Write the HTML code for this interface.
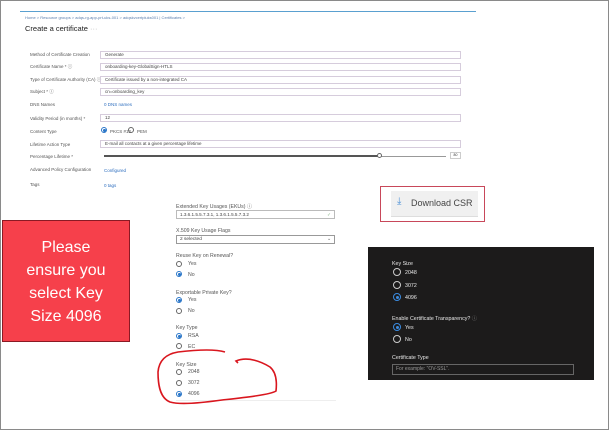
<!DOCTYPE html>
<html><head><meta charset="utf-8"><style>
*{margin:0;padding:0;box-sizing:border-box}
body{width:610px;height:431px;background:#fff;position:relative;overflow:hidden;font-family:"Liberation Sans",sans-serif;color:#333}
.a{position:absolute;white-space:nowrap}
.frame{position:absolute;left:0;top:0;width:609px;height:430px;border:1.5px solid #8a8a8a}
.lbl{font-size:4.5px;color:#555}
.inp{position:absolute;left:100px;width:361px;height:8px;border:1px solid #d6ccdc;font-size:4.5px;padding-left:4px;line-height:6px;color:#444}
.lnk{font-size:4.5px;color:#2f6fbf}
.s{font-size:5.2px;color:#555}
.r{position:absolute;width:6px;height:6px;border:0.8px solid #666;border-radius:50%}
.r.on{border-color:#2a76c8}
.r.on::after{content:"";position:absolute;left:1.2px;top:1.2px;width:2.4px;height:2.4px;border-radius:50%;background:#2a76c8}
.d{font-size:5.3px;color:#e8e8e8}
.dr{position:absolute;width:8px;height:8px;border:0.9px solid #ccc;border-radius:50%}
.dr.on{border-color:#3b8be0}
.dr.on::after{content:"";position:absolute;left:1.7px;top:1.7px;width:3px;height:3px;border-radius:50%;background:#3b8be0}
</style></head><body>
<div class="frame"></div>
<div class="a" style="left:20px;top:11px;width:456px;height:1px;background:#5aa0d0"></div>
<div class="a" style="left:25px;top:15px;font-size:4px;color:#5b7fae">Home &gt; Resource groups &gt; adqs-rg-app-prt-uks-001 &gt; adqskvcertpluks001 | Certificates &gt;</div>
<div class="a" style="left:25px;top:24px;font-size:7.5px;color:#222">Create a certificate <span style="color:#bbb">···</span></div>

<div class="a lbl" style="left:30px;top:52px">Method of Certificate Creation</div>
<div class="inp" style="top:51px">Generate</div>
<div class="a lbl" style="left:30px;top:64px">Certificate Name * ⓘ</div>
<div class="inp" style="top:63px">onboarding-key-GlobalSign-HTLS</div>
<div class="a lbl" style="left:30px;top:77px">Type of Certificate Authority (CA) ⓘ</div>
<div class="inp" style="top:76px">Certificate issued by a non-integrated CA</div>
<div class="a lbl" style="left:30px;top:89px">Subject * ⓘ</div>
<div class="inp" style="top:88px">cn=onboarding_key</div>
<div class="a lbl" style="left:30px;top:102px">DNS Names</div>
<div class="a lnk" style="left:104px;top:102px">0 DNS names</div>
<div class="a lbl" style="left:30px;top:116px">Validity Period (in months) *</div>
<div class="inp" style="top:114px">12</div>
<div class="a lbl" style="left:30px;top:129px">Content Type</div>
<div class="r on" style="left:101px;top:127px"></div><div class="a lbl" style="left:110px;top:129px">PKCS #12</div>
<div class="r" style="left:128px;top:127px"></div><div class="a lbl" style="left:137px;top:129px">PEM</div>
<div class="a lbl" style="left:30px;top:142px">Lifetime Action Type</div>
<div class="inp" style="top:140px">E-mail all contacts at a given percentage lifetime</div>
<div class="a lbl" style="left:30px;top:154px">Percentage Lifetime *</div>
<div class="a" style="left:104px;top:155px;width:276px;height:1.5px;background:#555"></div>
<div class="a" style="left:380px;top:155.5px;width:66px;height:1px;background:#999"></div>
<div class="a" style="left:377px;top:153px;width:5px;height:5px;border:0.8px solid #666;border-radius:50%;background:#fff"></div>
<div class="a" style="left:450px;top:152px;width:11px;height:7px;border:1px solid #ccc;font-size:3.5px;text-align:center;line-height:5px">80</div>
<div class="a lbl" style="left:30px;top:167px">Advanced Policy Configuration</div>
<div class="a lnk" style="left:104px;top:168px">Configured</div>
<div class="a lbl" style="left:30px;top:182px">Tags</div>
<div class="a lnk" style="left:104px;top:183px">0 tags</div>

<div class="a" style="left:380px;top:186px;width:105px;height:36px;border:1px solid #c8485a"></div>
<div class="a" style="left:391px;top:191px;width:87px;height:26px;background:#f0f0f0;border-bottom:1px solid #ddd"></div>
<div class="a" style="left:397px;top:196px;font-size:10px;color:#4a8fd6">⤓</div>
<div class="a" style="left:411px;top:198px;font-size:9px;color:#444">Download CSR</div>

<div class="a s" style="left:176px;top:203px">Extended Key Usages (EKUs) ⓘ</div>
<div class="a" style="left:176px;top:210px;width:159px;height:9px;border:1px solid #bbb;font-size:4.6px;padding-left:3px;line-height:7px;color:#444">1.3.6.1.5.5.7.3.1, 1.3.6.1.5.5.7.3.2<span style="position:absolute;right:3px;color:#7a7">✓</span></div>
<div class="a s" style="left:176px;top:228px">X.509 Key Usage Flags</div>
<div class="a" style="left:176px;top:235px;width:159px;height:9px;border:1px solid #999;font-size:4.8px;padding-left:3px;line-height:7px;color:#444">2 selected<span style="position:absolute;right:3px;color:#666">⌄</span></div>
<div class="a s" style="left:176px;top:253px">Reuse Key on Renewal?</div>
<div class="r" style="left:176px;top:261px"></div><div class="a s" style="left:188px;top:261px">Yes</div>
<div class="r on" style="left:176px;top:271px"></div><div class="a s" style="left:188px;top:272px">No</div>
<div class="a s" style="left:176px;top:290px">Exportable Private Key?</div>
<div class="r on" style="left:176px;top:297px"></div><div class="a s" style="left:188px;top:297px">Yes</div>
<div class="r" style="left:176px;top:308px"></div><div class="a s" style="left:188px;top:308px">No</div>
<div class="a s" style="left:176px;top:325px">Key Type</div>
<div class="r on" style="left:176px;top:333px"></div><div class="a s" style="left:188px;top:333px">RSA</div>
<div class="r" style="left:176px;top:343px"></div><div class="a s" style="left:188px;top:344px">EC</div>
<div class="a s" style="left:176px;top:362px">Key Size</div>
<div class="r" style="left:176px;top:369px"></div><div class="a s" style="left:188px;top:369px">2048</div>
<div class="r" style="left:176px;top:380px"></div><div class="a s" style="left:188px;top:380px">3072</div>
<div class="r on" style="left:176px;top:391px"></div><div class="a s" style="left:188px;top:391px">4096</div>
<div class="a" style="left:176px;top:400px;width:160px;height:1px;background:#eee"></div>

<svg class="a" style="left:0;top:0" width="610" height="431"><path d="M238,363 L236,361 C248,356 262,362 270,367 C276,372 277,382 276,391 C270,395 240,398 222,400 C200,403 180,405 170,402 C160,398 158,385 158,372 C159,360 166,354 178,352 C195,350 215,349 225,352" fill="none" stroke="#d9161e" stroke-width="1.6"/></svg>

<div class="a" style="left:2px;top:220px;width:128px;height:122px;background:#f6404b;border:1px solid #8a1a24;color:#fff;font-size:16px;line-height:23px;text-align:center;padding-top:15px;white-space:normal">Please<br>ensure you<br>select Key<br>Size 4096</div>

<div class="a" style="left:368px;top:247px;width:226px;height:133px;background:#1c1b1b"></div>
<div class="a d" style="left:392px;top:261px">Key Size</div>
<div class="dr" style="left:393px;top:268px"></div><div class="a d" style="left:405px;top:270px">2048</div>
<div class="dr" style="left:393px;top:281px"></div><div class="a d" style="left:405px;top:283px">3072</div>
<div class="dr on" style="left:393px;top:293px"></div><div class="a d" style="left:405px;top:295px">4096</div>
<div class="a d" style="left:392px;top:314px">Enable Certificate Transparency? <span style="color:#888">ⓘ</span></div>
<div class="dr on" style="left:393px;top:323px"></div><div class="a d" style="left:405px;top:325px">Yes</div>
<div class="dr" style="left:393px;top:335px"></div><div class="a d" style="left:405px;top:337px">No</div>
<div class="a d" style="left:392px;top:355px">Certificate Type</div>
<div class="a" style="left:392px;top:364px;width:182px;height:11px;border:1px solid #666;font-size:5px;color:#999;padding-left:3px;line-height:9px">For example: "OV-SSL".</div>
</body></html>
